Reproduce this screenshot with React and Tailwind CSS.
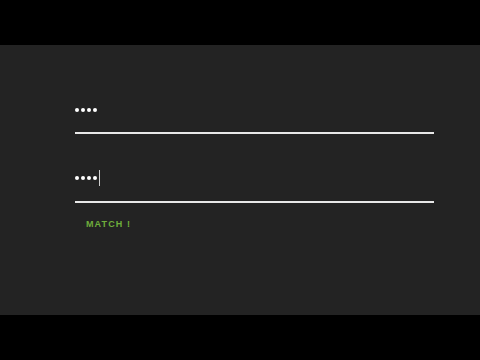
function Dots() {
    return (
        <div className="flex gap-[2px]">
            <span className="w-[4px] h-[4px] rounded-full bg-white" />
            <span className="w-[4px] h-[4px] rounded-full bg-white" />
            <span className="w-[4px] h-[4px] rounded-full bg-white" />
            <span className="w-[4px] h-[4px] rounded-full bg-white" />
        </div>
    )
}

export default function App() {
    return (
        <div className="w-[480px] h-[360px] bg-black pt-[45px]">
            <div className="h-[270px] bg-[#232323] pl-[75px] pr-[46px] pt-[63px]">
                <Dots />
                <div className="mt-[20px] h-[2px] bg-[#e8e8e8]" />
                <div className="mt-[36px] h-[16px] flex items-center">
                    <Dots />
                    <span className="ml-[2px] w-px h-[16px] bg-[#cfcfcf]" />
                </div>
                <div className="mt-[15px] h-[2px] bg-[#e8e8e8]" />
                <p className="mt-[15px] ml-[11px] text-[9px] leading-[12px] tracking-[1.1px] font-semibold text-[#6fae3c]" style={{ fontFamily: '"Liberation Sans", Arial, sans-serif' }}>
                    MATCH !
                </p>
            </div>
        </div>
    )
}
